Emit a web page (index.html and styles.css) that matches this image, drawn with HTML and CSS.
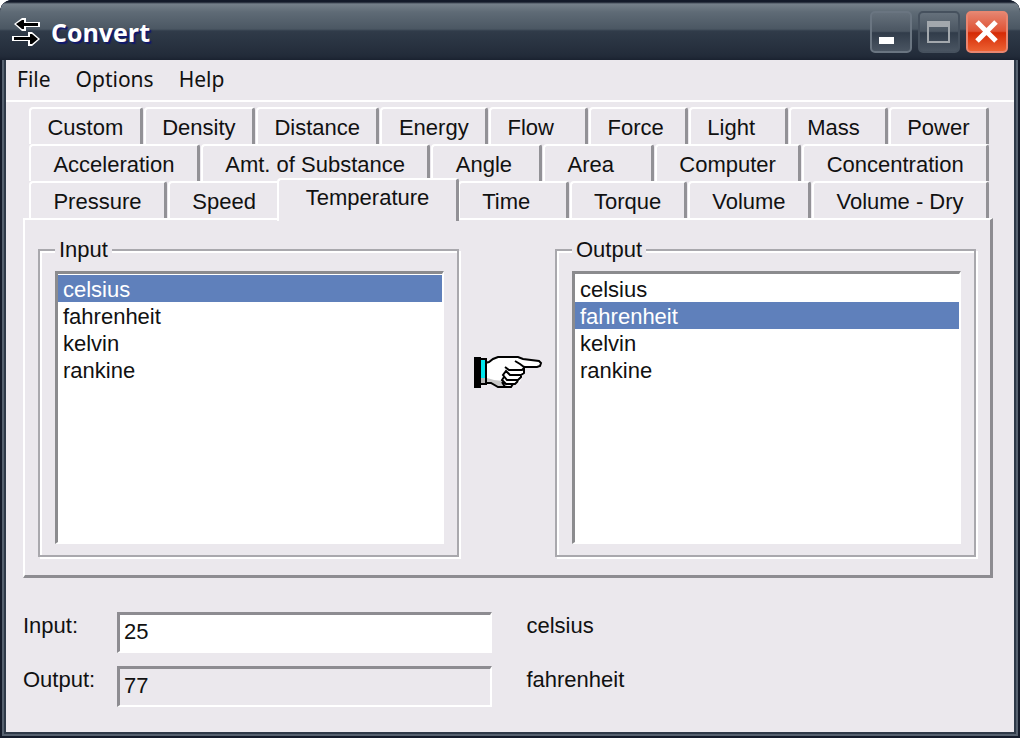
FILE: index.html
```html
<!DOCTYPE html>
<html lang="en">

<head>
    <meta charset="UTF-8">
    <meta name="viewport" content="width=device-width, initial-scale=1.0">
    <title>Convert</title>
    <link rel="stylesheet" href="styles.css">
</head>

<body>
    <div class="window">
        <header class="titlebar">
            <svg class="app-icon" width="32" height="32" viewBox="0 0 32 32">
                <path d="M3 8 L11 2 H15 V6 H29 V11 H15 V15 H11 Z M29 23 L21 16 H17 V20 H1 V25 H17 V30 H21 Z" fill="#fff" />
                <path d="M5 8 L11 4 H13 V7 H27 V10 H13 V13 H11 Z M27 23 L21 18 H19 V21 H3 V24 H19 V28 H21 Z" fill="#000" />
            </svg>
            <h1>Convert</h1>
            <div class="buttons">
                <button class="win-btn" aria-label="Minimize">
                    <svg width="38" height="38" viewBox="0 0 38 38"><rect x="7" y="24" width="15" height="7" fill="#fff" /></svg>
                </button>
                <button class="win-btn max" aria-label="Maximize">
                    <svg width="38" height="38" viewBox="0 0 38 38">
                        <rect x="8" y="9" width="21" height="20" fill="none" stroke="#a3a8ad" stroke-width="2" />
                        <rect x="7" y="8" width="23" height="6" fill="#a3a8ad" />
                    </svg>
                </button>
                <button class="win-btn close" aria-label="Close">
                    <svg width="38" height="38" viewBox="0 0 38 38"><path d="M9 9 L28 28 M28 9 L9 28" stroke="#fff" stroke-width="5" /></svg>
                </button>
            </div>
        </header>

        <nav class="menu">
            <button>File</button>
            <button>Options</button>
            <button>Help</button>
        </nav>

        <main class="content">
            <div class="tabs">
                <div class="tab-row">
                    <button class="tab"><span>Custom</span></button>
                    <button class="tab"><span>Density</span></button>
                    <button class="tab"><span>Distance</span></button>
                    <button class="tab"><span>Energy</span></button>
                    <button class="tab"><span>Flow</span></button>
                    <button class="tab"><span>Force</span></button>
                    <button class="tab"><span>Light</span></button>
                    <button class="tab"><span>Mass</span></button>
                    <button class="tab"><span>Power</span></button>
                </div>
                <div class="tab-row">
                    <button class="tab"><span>Acceleration</span></button>
                    <button class="tab"><span>Amt. of Substance</span></button>
                    <button class="tab"><span>Angle</span></button>
                    <button class="tab"><span>Area</span></button>
                    <button class="tab"><span>Computer</span></button>
                    <button class="tab"><span>Concentration</span></button>
                </div>
                <div class="tab-row">
                    <button class="tab"><span>Pressure</span></button>
                    <button class="tab"><span>Speed</span></button>
                    <button class="tab active"><span>Temperature</span></button>
                    <button class="tab"><span>Time</span></button>
                    <button class="tab"><span>Torque</span></button>
                    <button class="tab"><span>Volume</span></button>
                    <button class="tab"><span>Volume - Dry</span></button>
                </div>
            </div>

            <section class="panel">
                <fieldset>
                    <legend>Input</legend>
                    <select id="from" size="9" aria-label="Input unit">
                        <option selected>celsius</option>
                        <option>fahrenheit</option>
                        <option>kelvin</option>
                        <option>rankine</option>
                    </select>
                </fieldset>
                <svg class="hand" width="78" height="45" viewBox="0 0 78 45">
                    <path d="M16 14 L20 14 L24 11 L28 8 H49 L55 10 L70 12 L73 14 L71 17 L62 18 L56 18 L56 23 L53 28 L51 33 L46 35 L42 38 L28 38 L20 34 H16 Z" fill="#fff" />
                    <path d="M18 29 L25 31 L34 32 L38 37 H28 L18 34 Z" fill="#c8c8c8" />
                    <g fill="none" stroke="#000" stroke-width="2">
                        <path d="M16 14 L20 13 L24 10 L29 8 H49 L54 10 L70 12 L72 14 L71 17 L68 18 H55 L51 15 L46 12" />
                        <path d="M36 18 L40 21 H53 L55 19 V24 L52 26 H41 L37 22 L34 26 L38 31 H49 L52 28 V25" />
                        <path d="M35 28 L33 31 L37 35 H46 L49 32 M33 33 L36 38 H29 L22 34 H16 M36 38 H42 L44 35" />
                    </g>
                    <rect x="5" y="8" width="7" height="31" fill="#000" />
                    <rect x="12" y="11" width="4" height="18" fill="#00e5ec" />
                    <rect x="12" y="29" width="4" height="7" fill="#b5b5b5" />
                    <path d="M12 10 H17 V35 H12" fill="none" stroke="#000" stroke-width="2" />
                </svg>
                <fieldset>
                    <legend>Output</legend>
                    <select id="to" size="9" aria-label="Output unit">
                        <option>celsius</option>
                        <option selected>fahrenheit</option>
                        <option>kelvin</option>
                        <option>rankine</option>
                    </select>
                </fieldset>
            </section>

            <div class="values">
                <label for="value">Input:</label>
                <input id="value" type="text" value="25">
                <span id="from-name">celsius</span>
                <label for="result">Output:</label>
                <input id="result" type="text" value="77" readonly>
                <span id="to-name">fahrenheit</span>
            </div>
        </main>
    </div>

    <script>
        const from = document.getElementById("from");
        const to = document.getElementById("to");
        const value = document.getElementById("value");

        // everything goes through kelvin
        const toKelvin = {
            celsius: t => t + 273.15,
            fahrenheit: t => (t + 459.67) * 5 / 9,
            kelvin: t => t,
            rankine: t => t * 5 / 9
        };
        const fromKelvin = {
            celsius: k => k - 273.15,
            fahrenheit: k => k * 9 / 5 - 459.67,
            kelvin: k => k,
            rankine: k => k * 9 / 5
        };

        function convert() {
            const k = toKelvin[from.value](Number(value.value));
            document.getElementById("result").value = Number(fromKelvin[to.value](k).toFixed(6));
            document.getElementById("from-name").textContent = from.value;
            document.getElementById("to-name").textContent = to.value;
        }

        from.addEventListener("change", convert);
        to.addEventListener("change", convert);
        value.addEventListener("input", convert);
    </script>
</body>

</html>
```
FILE: styles.css
```css
* {
    padding: 0;
    margin: 0;
    box-sizing: border-box;
}

body {
    background: #fff;
    color: #111;
    font-family: "Liberation Sans", Arial, sans-serif;
    font-size: 22px;
    line-height: 27px;
}

button,
input,
select {
    font: inherit;
    color: inherit;
    border: none;
    border-radius: 0;
    background: none;
    outline: none;
}

.window {
    display: flex;
    flex-direction: column;
    min-height: 100vh;
    padding: 0 6px 6px;
    border-radius: 12px 12px 0 0;
    background: #2e3948;
    box-shadow: inset 0 0 0 2px #141b2a, inset 0 0 0 4px #56616f;
    overflow: hidden;
}

/* title bar */

.titlebar {
    display: flex;
    align-items: center;
    gap: 8px;
    height: 60px;
    margin: 0 -6px;
    padding: 4px 12px 0 11px;
    border-radius: 12px 12px 0 0;
    background: linear-gradient(#141b2a 0, #141b2a 2px, #75808a 4px, #5f6b76 12px, #4b5763 29px, #303b49 31px, #222b39 56px, #1a2230 100%);
}

.titlebar h1 {
    flex: 1;
    font-family: "Open Sans", sans-serif;
    font-size: 25px;
    line-height: 36px;
    font-weight: bold;
    color: #fff;
    text-shadow: 2px 2px 1px #10186e;
}

.buttons {
    display: flex;
    gap: 6px;
}

.win-btn {
    width: 42px;
    height: 42px;
    border: 2px solid #6a7581;
    border-radius: 5px;
    background: linear-gradient(#65707b, #4b5662 48%, #313c4a 52%, #4a5562);
    cursor: pointer;
}

.win-btn svg {
    display: block;
}

.win-btn.max {
    border-color: #46515e;
}

.win-btn.close {
    border-color: #e88670;
    background: linear-gradient(#e5836e, #df5234 48%, #d52a05 52%, #ec6132);
}

/* menu */

.menu {
    display: flex;
    gap: 25px;
    height: 42px;
    padding: 0 11px 2px;
    background: #ebe8ed;
    border-bottom: 2px solid #fff;
    font-family: "Noto Sans", sans-serif;
    font-size: 21px;
}

.content {
    flex: 1;
    padding: 5px 21px 24px 17px;
    background: #ebe8ed;
}

/* tabs */

.tabs {
    padding: 0 4px 0 6px;
}

.tab-row {
    display: flex;
    gap: 1px;
}

.tab {
    flex: 1 1 auto;
    height: 37px;
    padding-top: 1px;
    border: 2px solid #fff;
    border-right: 3px solid #929196;
    border-bottom: none;
    border-radius: 4px 3px 0 0;
    white-space: nowrap;
}

.tab span {
    display: inline-block;
    min-width: 61px;
    text-align: left;
}

.tab.active {
    position: relative;
    height: 43px;
    margin: -3px -2px -3px -5px;
    padding: 0 4px 6px;
    background: #ebe8ed;
}

.panel {
    display: flex;
    align-items: center;
    padding: 16px 14px 18px 13px;
    border: 2px solid #fff;
    border-right: 3px solid #8d8c91;
    border-bottom: 3px solid #8d8c91;
}

fieldset {
    flex: 1;
    min-width: 0;
    padding: 8px 13px 11px 15px;
    border: 2px solid #a9a8ad;
    box-shadow: 2px 2px 0 #fff, inset 2px 2px 0 #fff;
}

legend {
    padding: 0 4px;
    background: #ebe8ed;
}

select {
    display: block;
    width: 100%;
    height: 273px;
    padding-top: 1px;
    border: 3px solid #8b8b8e;
    border-right: 2px solid #fff;
    border-bottom: 2px solid #fff;
    background: #fff;
    overflow: hidden;
}

option {
    height: 27px;
    padding: 2px 5px 0;
    line-height: 27px;
}

option:checked {
    color: #fff;
    background: #5f80bb linear-gradient(#5f80bb, #5f80bb);
    -webkit-text-fill-color: #fff;
}

.hand {
    flex: none;
    margin: 0 8px 50px 10px;
}

/* value fields */

.values {
    display: grid;
    grid-template-columns: 94px 3fr 4fr;
    row-gap: 13px;
    margin-top: 34px;
}

.values input {
    height: 41px;
    padding: 0 4px 2px;
    border: 3px solid #8d8c91;
    border-right: 2px solid #fff;
    border-bottom: 2px solid #fff;
    background: #fff;
}

.values input:read-only {
    background: #ebe8ed;
}

.values span {
    padding-left: 34px;
}
```
